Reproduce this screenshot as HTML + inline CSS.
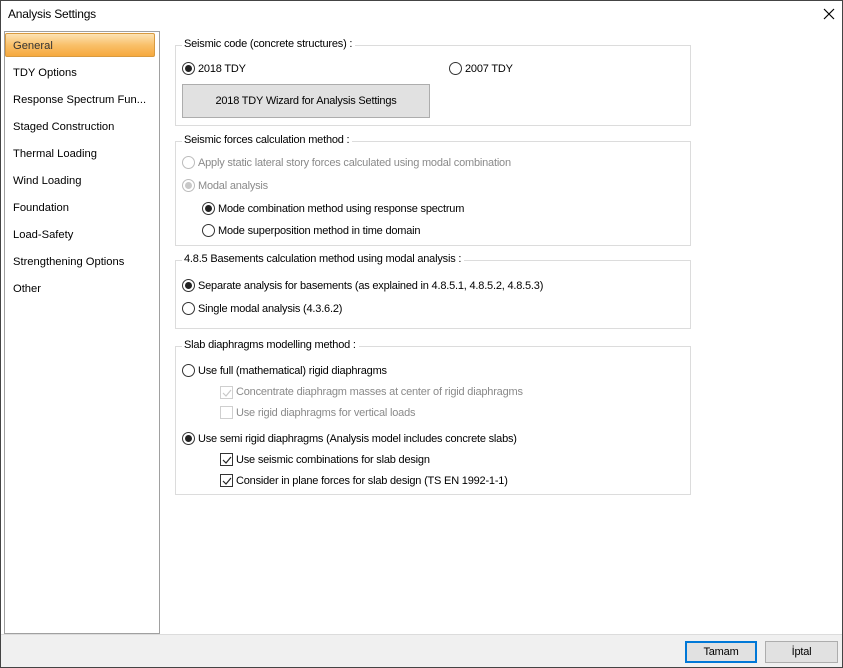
<!DOCTYPE html>
<html><head><meta charset="utf-8"><style>
*{margin:0;padding:0;box-sizing:border-box}
body{width:843px;height:668px;background:#fff;font-family:"Liberation Sans",sans-serif;font-size:11px;letter-spacing:-0.2px;color:#000;position:relative;overflow:hidden}
.a{position:absolute;white-space:nowrap}
.win{position:absolute;left:0;top:0;width:843px;height:668px;border:1px solid #444}
.grp{position:absolute;border:1px solid #dcdcdc}
.lg{position:absolute;top:-8px;left:6px;background:#fff;padding:0 3px 0 2px}
.rb{position:absolute;width:13px;height:13px;border:1px solid #333;border-radius:50%;background:#fff}
.rb.on::after{content:"";position:absolute;left:2px;top:2px;width:7px;height:7px;border-radius:50%;background:#222}
.rb.dis{border-color:#bcbcbc}
.rb.dis.on::after{background:#c8c8c8}
.cb{position:absolute;width:13px;height:13px;border:1px solid #333;background:#fff}
.cb.dis{border-color:#cfcfcf}
.cb svg{position:absolute;left:0;top:0}
.dis-t{color:#8a8a8a}
.nav{position:absolute;left:13px;font-size:11.2px;letter-spacing:0}
.t{margin-top:1px}
</style></head><body>
<div class="win"></div>
<div class="a" style="left:8px;top:7px;font-size:12px;letter-spacing:-0.2px">Analysis Settings</div>
<svg class="a" style="left:823px;top:8px" width="12" height="12"><path d="M1 1L11 11M11 1L1 11" stroke="#000" stroke-width="1.2"/></svg>

<div class="a" style="left:4px;top:31px;width:156px;height:603px;border:1px solid #a0a0a0;background:#fff"></div>
<div class="a" style="left:5px;top:33px;width:150px;height:24px;border:1px solid #d89a40;border-radius:2px;background:linear-gradient(#fde3b4,#f9c06a 50%,#f6a93e);"></div>
<div class="nav a" style="top:40px;color:#333">General</div>
<div class="nav a" style="top:67px">TDY Options</div>
<div class="nav a" style="top:94px">Response Spectrum Fun...</div>
<div class="nav a" style="top:121px">Staged Construction</div>
<div class="nav a" style="top:148px">Thermal Loading</div>
<div class="nav a" style="top:175px">Wind Loading</div>
<div class="nav a" style="top:202px">Foundation</div>
<div class="nav a" style="top:229px">Load-Safety</div>
<div class="nav a" style="top:256px">Strengthening Options</div>
<div class="nav a" style="top:283px">Other</div>

<div class="grp" style="left:175px;top:45px;width:516px;height:81px"><span class="lg">Seismic code (concrete structures) :</span></div>
<div class="rb on" style="left:182px;top:62px"></div><div class="a t" style="left:198px;top:62px">2018 TDY</div>
<div class="rb" style="left:449px;top:62px"></div><div class="a t" style="left:465px;top:62px">2007 TDY</div>
<div class="a" style="left:182px;top:84px;width:248px;height:34px;border:1px solid #adadad;background:#e1e1e1;text-align:center;line-height:32px">2018 TDY Wizard for Analysis Settings</div>

<div class="grp" style="left:175px;top:141px;width:516px;height:105px"><span class="lg">Seismic forces calculation method :</span></div>
<div class="rb dis" style="left:182px;top:156px"></div><div class="a t dis-t" style="left:198px;top:156px">Apply static lateral story forces calculated using modal combination</div>
<div class="rb dis on" style="left:182px;top:179px"></div><div class="a t dis-t" style="left:198px;top:179px">Modal analysis</div>
<div class="rb on" style="left:202px;top:202px"></div><div class="a t" style="left:218px;top:202px">Mode combination method using response spectrum</div>
<div class="rb" style="left:202px;top:224px"></div><div class="a t" style="left:218px;top:224px">Mode superposition method in time domain</div>

<div class="grp" style="left:175px;top:260px;width:516px;height:69px"><span class="lg">4.8.5 Basements calculation method using modal analysis :</span></div>
<div class="rb on" style="left:182px;top:279px"></div><div class="a t" style="left:198px;top:279px">Separate analysis for basements (as explained in 4.8.5.1, 4.8.5.2, 4.8.5.3)</div>
<div class="rb" style="left:182px;top:302px"></div><div class="a t" style="left:198px;top:302px">Single modal analysis (4.3.6.2)</div>

<div class="grp" style="left:175px;top:346px;width:516px;height:149px"><span class="lg">Slab diaphragms modelling method :</span></div>
<div class="rb" style="left:182px;top:364px"></div><div class="a t" style="left:198px;top:364px">Use full (mathematical) rigid diaphragms</div>
<div class="cb dis" style="left:220px;top:386px"><svg width="13" height="13"><path d="M2 6L5 9L10 3" stroke="#c8c8c8" fill="none" stroke-width="1.2"/></svg></div><div class="a t dis-t" style="left:236px;top:385px">Concentrate diaphragm masses at center of rigid diaphragms</div>
<div class="cb dis" style="left:220px;top:406px"></div><div class="a t dis-t" style="left:236px;top:406px">Use rigid diaphragms for vertical loads</div>
<div class="rb on" style="left:182px;top:432px"></div><div class="a t" style="left:198px;top:432px">Use semi rigid diaphragms (Analysis model includes concrete slabs)</div>
<div class="cb" style="left:220px;top:453px"><svg width="13" height="13"><path d="M2 6L5 9L10 3" stroke="#222" fill="none" stroke-width="1.2"/></svg></div><div class="a t" style="left:236px;top:453px">Use seismic combinations for slab design</div>
<div class="cb" style="left:220px;top:474px"><svg width="13" height="13"><path d="M2 6L5 9L10 3" stroke="#222" fill="none" stroke-width="1.2"/></svg></div><div class="a t" style="left:236px;top:474px">Consider in plane forces for slab design (TS EN 1992-1-1)</div>

<div class="a" style="left:1px;top:634px;width:841px;height:33px;background:#f0f0f0;border-top:1px solid #dcdcdc"></div>
<div class="a" style="left:685px;top:641px;width:72px;height:22px;border:2px solid #0078d7;background:#e1e1e1;text-align:center;line-height:18px">Tamam</div>
<div class="a" style="left:765px;top:641px;width:73px;height:22px;border:1px solid #adadad;background:#e1e1e1;text-align:center;line-height:20px">İptal</div>
</body></html>
